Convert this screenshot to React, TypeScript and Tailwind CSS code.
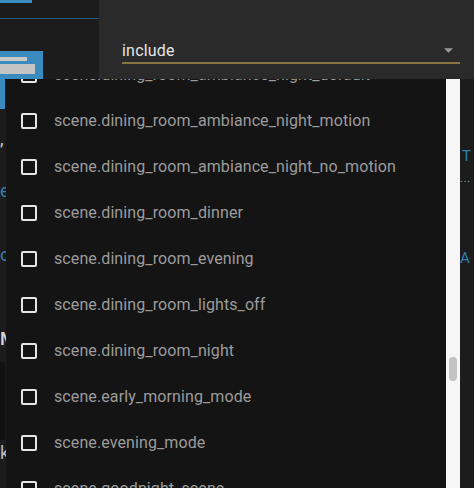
import { useState } from 'react';

const entities = [
  'scene.dining_room_ambiance_night_default',
  'scene.dining_room_ambiance_night_motion',
  'scene.dining_room_ambiance_night_no_motion',
  'scene.dining_room_dinner',
  'scene.dining_room_evening',
  'scene.dining_room_lights_off',
  'scene.dining_room_night',
  'scene.early_morning_mode',
  'scene.evening_mode',
  'scene.goodnight_scene',
];

function Checkbox({ checked }: { checked: boolean }) {
  return (
    <span className="flex h-4 w-4 shrink-0 items-center justify-center rounded-[2px] border-2 border-[#e6e6e6]">
      {checked && <span className="h-2 w-2 bg-[#e6e6e6]" />}
    </span>
  );
}

export default function App() {
  const [selected, setSelected] = useState<string[]>([]);

  function toggle(id: string) {
    setSelected((prev) => (prev.includes(id) ? prev.filter((x) => x !== id) : [...prev, id]));
  }

  return (
    <div
      className="relative h-[488px] w-[474px] overflow-hidden bg-[#1c1c1c]"
      style={{ fontFamily: 'Roboto, "Noto Sans", sans-serif' }}
    >
      {/* page behind the dialog */}
      <div className="flex w-[99px] flex-col">
        <div className="h-[3px] w-8 bg-[#3b8ec2]" />
        <div className="mt-[15px] h-px w-full bg-[#245a80]" />
        <div className="mt-8 flex h-[28px] w-[43px] flex-col justify-center gap-[3px] bg-[#3a8cc0] pr-[4px]">
          <div className="h-[4px] w-[27px] bg-[#c9c9c9]" />
          <div className="h-[10px] w-[35px] bg-[#c4c4c4]" />
        </div>
        <div className="h-[30px] w-[5px] bg-[#3a8cc0]" />
      </div>
      <div className="absolute left-0 top-[126px] flex w-[7px] flex-col text-[18px] leading-none">
        <span className="mt-[4px] text-[#cfcfcf]">,</span>
        <span className="mt-[34px] text-[#2f7fb4]">e</span>
        <span className="mt-[46px] text-[#2f7fb4]">o</span>
        <span className="mt-[66px] font-medium text-[#d8d8d8]">M</span>
      </div>
      <div className="absolute bottom-[48px] left-0 top-[362px] w-[5px] bg-[#111111]" />
      <div className="absolute left-0 top-[444px] text-[18px] leading-none text-[#bdbdbd]">k</div>
      <div className="absolute right-0 top-[149px] flex w-[14px] flex-col text-[15px] leading-none">
        <span className="pl-[2px] text-[#2f7fb4]">T</span>
        <span className="mt-[10px] text-[10px] tracking-[1px] text-[#aaaaaa]">...</span>
        <span className="mt-[67px] text-[#2f7fb4]">A</span>
      </div>

      {/* dialog */}
      <div className="absolute left-[99px] right-0 top-0 h-[79px] bg-[#2a2a2a] pl-[23px] pr-[14px]">
        <div className="mt-[39px] flex h-[25px] items-center justify-between border-b-2 border-[#8b7443]">
          <span className="text-[16px] tracking-[0.2px] text-[#e4e4e4]">include</span>
          <svg width="9" height="5" viewBox="0 0 10 5" className="mr-[7px]">
            <path d="M0 0h10L5 5z" fill="#9a9a9a" />
          </svg>
        </div>
      </div>

      {/* dropdown list */}
      <div className="absolute bottom-0 left-[6px] top-[79px] w-[454px] overflow-hidden bg-[#141414]">
        <div className="absolute bottom-0 right-0 top-0 w-[14px] bg-[#f6f6f6]">
          <div className="ml-[3px] mt-[278px] h-[24px] w-[8px] rounded-full bg-[#c2c2c2]" />
        </div>
        <ul className="relative -mt-[27px] pr-[14px]">
          {entities.map((id) => (
            <li
              key={id}
              onClick={() => toggle(id)}
              className="flex h-[46px] items-center gap-[17px] pl-[15px]"
            >
              <Checkbox checked={selected.includes(id)} />
              <span className="whitespace-nowrap text-[16px] tracking-[0.1px] text-[#9c9c9c]">{id}</span>
            </li>
          ))}
        </ul>
      </div>
    </div>
  );
}
